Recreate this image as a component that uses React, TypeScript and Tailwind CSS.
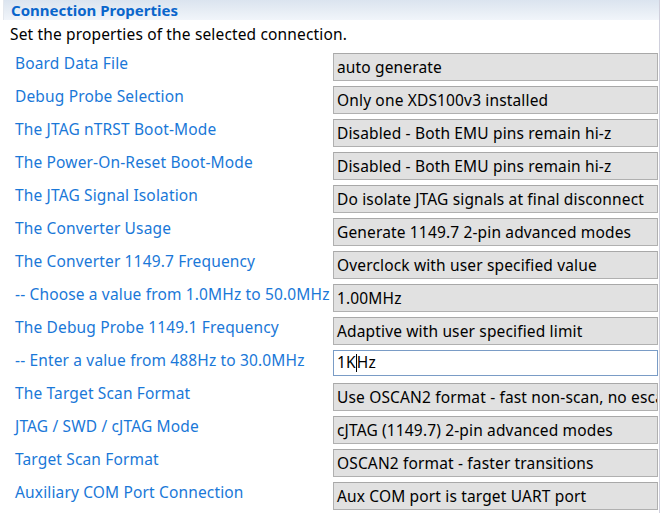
import React from 'react';

type Row = { label: string; value: string; editable?: boolean };

const rows: Row[] = [
  { label: 'Board Data File', value: 'auto generate' },
  { label: 'Debug Probe Selection', value: 'Only one XDS100v3 installed' },
  { label: 'The JTAG nTRST Boot-Mode', value: 'Disabled - Both EMU pins remain hi-z' },
  { label: 'The Power-On-Reset Boot-Mode', value: 'Disabled - Both EMU pins remain hi-z' },
  { label: 'The JTAG Signal Isolation', value: 'Do isolate JTAG signals at final disconnect' },
  { label: 'The Converter Usage', value: 'Generate 1149.7 2-pin advanced modes' },
  { label: 'The Converter 1149.7 Frequency', value: 'Overclock with user specified value' },
  { label: '-- Choose a value from 1.0MHz to 50.0MHz', value: '1.00MHz' },
  { label: 'The Debug Probe 1149.1 Frequency', value: 'Adaptive with user specified limit' },
  { label: '-- Enter a value from 488Hz to 30.0MHz', value: '1KHz', editable: true },
  { label: 'The Target Scan Format', value: 'Use OSCAN2 format - fast non-scan, no escape' },
  { label: 'JTAG / SWD / cJTAG Mode', value: 'cJTAG (1149.7) 2-pin advanced modes' },
  { label: 'Target Scan Format', value: 'OSCAN2 format - faster transitions' },
  { label: 'Auxiliary COM Port Connection', value: 'Aux COM port is target UART port' },
];

const font = { fontFamily: '"Noto Sans", "Open Sans", sans-serif' };

export default function App() {
  return (
    <div className="w-[661px] h-[513px] bg-white flex overflow-hidden text-[15.5px] tracking-[0.15px]" style={font}>
      <div className="w-[659px] flex flex-col">
        {/* section header */}
        <div className="ml-[3px] h-[20px] pl-[7px] border-l border-[#e4e8ee] bg-gradient-to-b from-[#dbe4ef] to-[#f1f5fa] flex items-center">
          <span className="font-bold text-[15px] tracking-normal text-[#0a66cc] leading-[20px]">Connection Properties</span>
        </div>
        <div className="pl-[10px] h-[28px] leading-[28px] text-black">
          Set the properties of the selected connection.
        </div>

        <div className="flex flex-col">
          {rows.map((r) => (
            <div key={r.label} className="flex h-[33px] items-start">
              <div className="w-[333px] pl-[15px] pt-[5px] leading-[20px] text-[#1a78d8] whitespace-nowrap overflow-hidden">
                {r.label}
              </div>
              {r.editable ? (
                <div className="mt-[5px] h-[26px] w-[325px] border border-[#7a9cc6] bg-white pl-[3px] flex items-center whitespace-nowrap overflow-hidden text-black">
                  <span>1K</span>
                  <span className="w-px h-[18px] bg-black" />
                  <span>Hz</span>
                </div>
              ) : (
                <div className="mt-[5px] h-[28px] w-[325px] border border-[#b0b0b0] border-t-[#a8a8a8] bg-[#e1e1e1] pl-[3px] pt-px flex items-center whitespace-nowrap overflow-hidden text-black">
                  {r.value}
                </div>
              )}
            </div>
          ))}
        </div>
      </div>
      <div className="w-px h-full bg-[#cfcfdc]" />
    </div>
  );
}
